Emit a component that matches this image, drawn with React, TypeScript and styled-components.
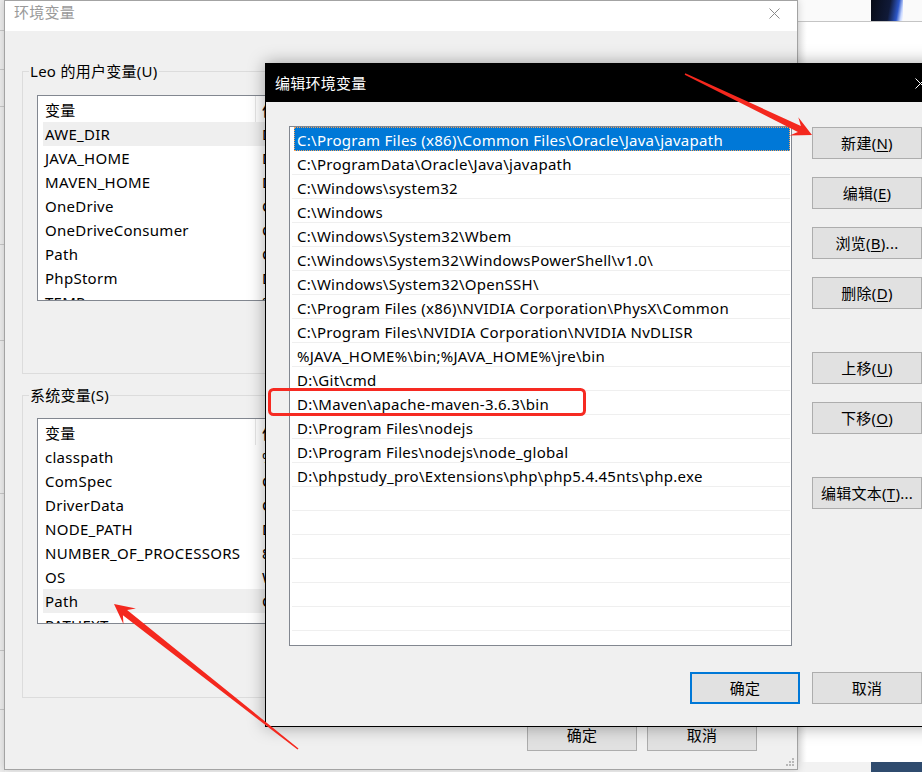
import React from "react";
import styled, { createGlobalStyle } from "styled-components";

const FONT = `"Noto Sans", "Noto Sans CJK SC", sans-serif`;

const GlobalStyle = createGlobalStyle`
  html, body { margin: 0; padding: 0; background: #ffffff; }
  body { font-family: ${FONT}; }
  #root { width: 922px; height: 772px; }
  * { box-sizing: border-box; }
`;

const Desktop = styled.div`
  position: relative;
  width: 922px;
  height: 772px;
  overflow: hidden;
  background: #f2f2f2;
  font-family: ${FONT};
  font-size: 15px;
  letter-spacing: 0.27px;
  color: #000;
`;

/* ---------- background windows ---------- */
const LeftBackWindow = styled.div`
  position: absolute;
  left: 0;
  top: 0;
  width: 5px;
  height: 772px;
  background-color: #ededed;
  background-image: linear-gradient(#c8c8c8, #c8c8c8), linear-gradient(#c8c8c8, #c8c8c8),
    linear-gradient(#c8c8c8, #c8c8c8), linear-gradient(#c8c8c8, #c8c8c8),
    linear-gradient(#c8c8c8, #c8c8c8), linear-gradient(#c8c8c8, #c8c8c8),
    linear-gradient(#c8c8c8, #c8c8c8), linear-gradient(#c8c8c8, #c8c8c8);
  background-size: 100% 1px;
  background-repeat: no-repeat;
  background-position: 0 30px, 0 69px, 0 106px, 0 244px, 0 340px, 0 493px, 0 650px, 0 709px;
`;

const RightBackWindow = styled.div`
  position: absolute;
  left: 797px;
  top: 0;
  width: 125px;
  height: 762px;
  background: linear-gradient(90deg, #e9e9e9 0px, #ffffff 10px);
  display: flex;
  flex-direction: column;
`;

const RightBackHeader = styled.div`
  height: 22px;
  border-bottom: 1px solid #c4c4c4;
  background: #fafafa;
  display: flex;
  padding-left: 74px;
`;

const RightBackImage = styled.div`
  width: 32px;
  height: 21px;
  background: linear-gradient(100deg, #070b16 0%, #101a38 55%, #2d57c8 80%, #c9d8ff 92%, #ffffff 100%);
`;

const TaskThumb = styled.div`
  position: absolute;
  left: 871px;
  top: 762px;
  width: 51px;
  height: 10px;
  background: #2f4b6e;
`;

/* ---------- generic window bits ---------- */
const Button = styled.button<{ $primary?: boolean; $gapBefore?: number }>`
  width: 110px;
  height: 32px;
  margin: ${(p) => p.$gapBefore ?? 0}px 0 0 0;
  padding: 0;
  flex: none;
  background: #e1e1e1;
  border: 1px solid ${(p) => (p.$primary ? "#0078d7" : "#adadad")};
  box-shadow: ${(p) => (p.$primary ? "inset 0 0 0 1px #0078d7" : "none")};
  font-family: ${FONT};
  font-size: 15px;
  letter-spacing: 0.27px;
  line-height: 20px;
  color: #000;
  display: flex;
  align-items: center;
  justify-content: center;

  u {
    text-decoration: underline;
    text-underline-offset: 2px;
  }
`;

const CloseIcon = ({ color }: { color: string }) => (
  <svg width="11" height="11" viewBox="0 0 11 11">
    <path d="M0.5 0.5 L10.5 10.5 M10.5 0.5 L0.5 10.5" stroke={color} strokeWidth="1" fill="none" />
  </svg>
);

/* ---------- outer window 环境变量 ---------- */
const OuterWindow = styled.div`
  position: absolute;
  left: 4px;
  top: 0;
  width: 794px;
  height: 770px;
  border: 1px solid #a3a3a3;
  background: #f0f0f0;
  display: flex;
  flex-direction: column;
  box-shadow: 0 0 8px rgba(0, 0, 0, 0.18);
`;

const OuterTitleBar = styled.div`
  height: 30px;
  background: #ffffff;
  display: flex;
  align-items: flex-start;
  justify-content: space-between;
  flex: none;
`;

const OuterTitle = styled.div`
  margin: 1px 0 0 9px;
  line-height: 20px;
  font-size: 15px;
  color: #9a9a9a;
`;

const OuterClose = styled.div`
  width: 46px;
  height: 24px;
  display: flex;
  align-items: center;
  justify-content: center;
`;

const OuterBody = styled.div`
  flex: 1;
  padding: 30px 17px 0 17px;
  display: flex;
  flex-direction: column;
`;

const Group = styled.fieldset`
  margin: 0;
  min-width: 0;
  border: 1px solid #dcdcdc;
  padding: 14px 14px 72px 14px;
  & + & {
    margin-top: 11px;
    padding-top: 13px;
    padding-bottom: 73px;
  }
`;

const GroupLabel = styled.legend`
  padding: 0 1px;
  margin-left: -8px;
  line-height: 20px;
  font-size: 15px;
`;

const VarList = styled.div`
  height: 206px;
  border: 1px solid #828790;
  background: #ffffff;
  overflow: hidden;
`;

const VarHeader = styled.div`
  height: 26px;
  display: grid;
  grid-template-columns: 218px 1fr;
  align-items: stretch;
`;

const VarHeaderCell = styled.div<{ $first?: boolean }>`
  display: flex;
  align-items: center;
  padding-left: ${(p) => (p.$first ? 7 : 6)}px;
  border-right: ${(p) => (p.$first ? "1px solid #e5e5e5" : "none")};
  white-space: nowrap;
  overflow: hidden;
`;

const VarRow = styled.div<{ $active?: boolean }>`
  height: 24px;
  margin-left: 5px;
  display: grid;
  grid-template-columns: 213px 1fr;
  line-height: 24px;
  background: ${(p) => (p.$active ? "#efefef" : "transparent")};
  white-space: nowrap;
`;

const VarName = styled.div`
  padding-left: 2px;
  overflow: hidden;
`;

const VarValue = styled.div`
  padding-left: 6px;
  overflow: hidden;
`;

const OuterFooter = styled.div`
  margin-top: 21px;
  padding-right: 23px;
  display: flex;
  justify-content: flex-end;
  gap: 10px;
`;

const Grip = styled.svg`
  position: absolute;
  right: 3px;
  bottom: 3px;
`;

/* ---------- inner window 编辑环境变量 ---------- */
const EditWindow = styled.div`
  position: absolute;
  left: 265px;
  top: 63px;
  width: 679px;
  height: 664px;
  border: 1px solid #000000;
  background: #f0f0f0;
  display: flex;
  flex-direction: column;
  box-shadow: 0 0 16px rgba(0, 0, 0, 0.35);
`;

const EditTitleBar = styled.div`
  height: 38px;
  flex: none;
  background: #000000;
  color: #ffffff;
  display: flex;
  align-items: center;
  justify-content: space-between;
  padding-left: 9px;
`;

const EditTitle = styled.div`
  font-size: 15px;
  line-height: 20px;
  margin-top: -1px;
`;

const EditClose = styled.div`
  width: 46px;
  height: 38px;
  display: flex;
  align-items: center;
  justify-content: center;
`;

const EditBody = styled.div`
  flex: 1;
  padding: 24px 21px 21px 23px;
  display: flex;
  flex-direction: column;
`;

const EditMain = styled.div`
  display: grid;
  grid-template-columns: 503px 110px;
  column-gap: 20px;
`;

const PathList = styled.div`
  height: 520px;
  border: 1px solid #828790;
  background: #ffffff;
  overflow: hidden;
  padding: 0 1px 0 2px;
`;

const PathRow = styled.div<{ $selected?: boolean }>`
  height: 24px;
  line-height: 26px;
  white-space: nowrap;
  overflow: visible;
  border-bottom: 1px solid ${(p) => (p.$selected ? "#0078d7" : "#efefef")};
  background: ${(p) => (p.$selected ? "#0078d7" : "transparent")};
  color: ${(p) => (p.$selected ? "#ffffff" : "#000000")};
  outline: ${(p) => (p.$selected ? "1px dotted #f3a35c" : "none")};
  outline-offset: -1px;
  margin-left: ${(p) => (p.$selected ? "2px" : "0")};
  padding-left: ${(p) => (p.$selected ? "3px" : "5px")};
`;

const ButtonColumn = styled.div`
  display: flex;
  flex-direction: column;
  padding-top: 1px;
`;

const EditFooter = styled.div`
  margin-top: 26px;
  display: flex;
  justify-content: flex-end;
  gap: 12px;
`;

/* ---------- annotations ---------- */
const Annotations = styled.svg`
  position: absolute;
  left: 0;
  top: 0;
  pointer-events: none;
`;

function arrowPoints(tx: number, ty: number, hx: number, hy: number): string {
  const dx = hx - tx;
  const dy = hy - ty;
  const L = Math.hypot(dx, dy);
  const ux = dx / L;
  const uy = dy / L;
  const nx = -uy;
  const ny = ux;
  const head = 20;
  const barb = 10;
  const notch = 14;
  const neck = 3.4;
  const tail = 0.8;
  const p = (a: number, b: number) =>
    `${(hx - ux * a + nx * b).toFixed(1)},${(hy - uy * a + ny * b).toFixed(1)}`;
  return [
    `${hx},${hy}`,
    p(head, barb),
    p(notch, neck),
    `${(tx + nx * tail).toFixed(1)},${(ty + ny * tail).toFixed(1)}`,
    `${(tx - nx * tail).toFixed(1)},${(ty - ny * tail).toFixed(1)}`,
    p(notch, -neck),
    p(head, -barb),
  ].join(" ");
}

/* ---------- data ---------- */
const userVars: [string, string][] = [
  ["AWE_DIR", "D:\\AWE"],
  ["JAVA_HOME", "D:\\Java\\jdk1.8.0_241"],
  ["MAVEN_HOME", "D:\\Maven\\apache-maven-3.6.3"],
  ["OneDrive", "C:\\Users\\Leo\\OneDrive"],
  ["OneDriveConsumer", "C:\\Users\\Leo\\OneDrive"],
  ["Path", "C:\\Users\\Leo\\AppData\\Local\\Microsoft\\WindowsApps"],
  ["PhpStorm", "D:\\PhpStorm\\bin;"],
  ["TEMP", "%USERPROFILE%\\AppData\\Local\\Temp"],
];

const sysVars: [string, string][] = [
  ["classpath", "%JAVA_HOME%\\lib;%JAVA_HOME%\\lib\\tools.jar"],
  ["ComSpec", "C:\\Windows\\system32\\cmd.exe"],
  ["DriverData", "C:\\Windows\\System32\\Drivers\\DriverData"],
  ["NODE_PATH", "D:\\Program Files\\nodejs\\node_global\\node_modules"],
  ["NUMBER_OF_PROCESSORS", "8"],
  ["OS", "Windows_NT"],
  ["Path", "C:\\Program Files (x86)\\Common Files\\Oracle\\Java\\javapath"],
  ["PATHEXT", ".COM;.EXE;.BAT;.CMD;.VBS;.VBE;.JS"],
];

const paths = [
  "C:\\Program Files (x86)\\Common Files\\Oracle\\Java\\javapath",
  "C:\\ProgramData\\Oracle\\Java\\javapath",
  "C:\\Windows\\system32",
  "C:\\Windows",
  "C:\\Windows\\System32\\Wbem",
  "C:\\Windows\\System32\\WindowsPowerShell\\v1.0\\",
  "C:\\Windows\\System32\\OpenSSH\\",
  "C:\\Program Files (x86)\\NVIDIA Corporation\\PhysX\\Common",
  "C:\\Program Files\\NVIDIA Corporation\\NVIDIA NvDLISR",
  "%JAVA_HOME%\\bin;%JAVA_HOME%\\jre\\bin",
  "D:\\Git\\cmd",
  "D:\\Maven\\apache-maven-3.6.3\\bin",
  "D:\\Program Files\\nodejs",
  "D:\\Program Files\\nodejs\\node_global",
  "D:\\phpstudy_pro\\Extensions\\php\\php5.4.45nts\\php.exe",
];

type Btn = { pre: string; key: string; post: string; gap: number };
const sideButtons: Btn[] = [
  { pre: "新建(", key: "N", post: ")", gap: 0 },
  { pre: "编辑(", key: "E", post: ")", gap: 18 },
  { pre: "浏览(", key: "B", post: ")...", gap: 18 },
  { pre: "删除(", key: "D", post: ")", gap: 18 },
  { pre: "上移(", key: "U", post: ")", gap: 43 },
  { pre: "下移(", key: "O", post: ")", gap: 18 },
  { pre: "编辑文本(", key: "T", post: ")...", gap: 43 },
];

const Label = ({ pre, k, post }: { pre: string; k: string; post: string }) => (
  <span>
    {pre}
    <u>{k}</u>
    {post}
  </span>
);

const VarTable = ({ rows, active }: { rows: [string, string][]; active: number }) => (
  <VarList>
    <VarHeader>
      <VarHeaderCell $first>变量</VarHeaderCell>
      <VarHeaderCell>值</VarHeaderCell>
    </VarHeader>
    {rows.map(([n, v], i) => (
      <VarRow key={n} $active={i === active}>
        <VarName>{n}</VarName>
        <VarValue>{v}</VarValue>
      </VarRow>
    ))}
  </VarList>
);

export default function App() {
  const emptyRows = Array.from({ length: 8 }, (_, i) => i);
  return (
    <>
      <GlobalStyle />
      <Desktop>
        <LeftBackWindow />
        <RightBackWindow>
          <RightBackHeader>
            <RightBackImage />
          </RightBackHeader>
        </RightBackWindow>
        <TaskThumb />

        <OuterWindow>
          <OuterTitleBar>
            <OuterTitle>环境变量</OuterTitle>
            <OuterClose>
              <CloseIcon color="#8a8a8a" />
            </OuterClose>
          </OuterTitleBar>
          <OuterBody>
            <Group>
              <GroupLabel>Leo 的用户变量(U)</GroupLabel>
              <VarTable rows={userVars} active={0} />
            </Group>
            <Group>
              <GroupLabel>系统变量(S)</GroupLabel>
              <VarTable rows={sysVars} active={6} />
            </Group>
            <OuterFooter>
              <Button>确定</Button>
              <Button>取消</Button>
            </OuterFooter>
          </OuterBody>
          <Grip width="9" height="9" viewBox="0 0 9 9">
            <g fill="#b8b8b8">
              <rect x="7" y="1" width="2" height="2" />
              <rect x="4" y="4" width="2" height="2" />
              <rect x="7" y="4" width="2" height="2" />
              <rect x="1" y="7" width="2" height="2" />
              <rect x="4" y="7" width="2" height="2" />
              <rect x="7" y="7" width="2" height="2" />
            </g>
          </Grip>
        </OuterWindow>

        <EditWindow>
          <EditTitleBar>
            <EditTitle>编辑环境变量</EditTitle>
            <EditClose>
              <CloseIcon color="#ffffff" />
            </EditClose>
          </EditTitleBar>
          <EditBody>
            <EditMain>
              <PathList>
                {paths.map((p, i) => (
                  <PathRow key={p} $selected={i === 0}>
                    {p}
                  </PathRow>
                ))}
                {emptyRows.map((i) => (
                  <PathRow key={"e" + i} />
                ))}
              </PathList>
              <ButtonColumn>
                {sideButtons.map((b) => (
                  <Button key={b.key} $gapBefore={b.gap}>
                    <Label pre={b.pre} k={b.key} post={b.post} />
                  </Button>
                ))}
              </ButtonColumn>
            </EditMain>
            <EditFooter>
              <Button $primary>确定</Button>
              <Button>取消</Button>
            </EditFooter>
          </EditBody>
        </EditWindow>

        <Annotations width="922" height="772" viewBox="0 0 922 772">
          <rect x="269.5" y="389.5" width="315" height="25" rx="4" ry="4" fill="none" stroke="#f62a22" strokeWidth="3" />
          <polygon points={arrowPoints(298, 749, 114, 604)} fill="#f4281e" />
          <polygon points={arrowPoints(685, 74, 812, 135)} fill="#f4281e" />
        </Annotations>
      </Desktop>
    </>
  );
}
